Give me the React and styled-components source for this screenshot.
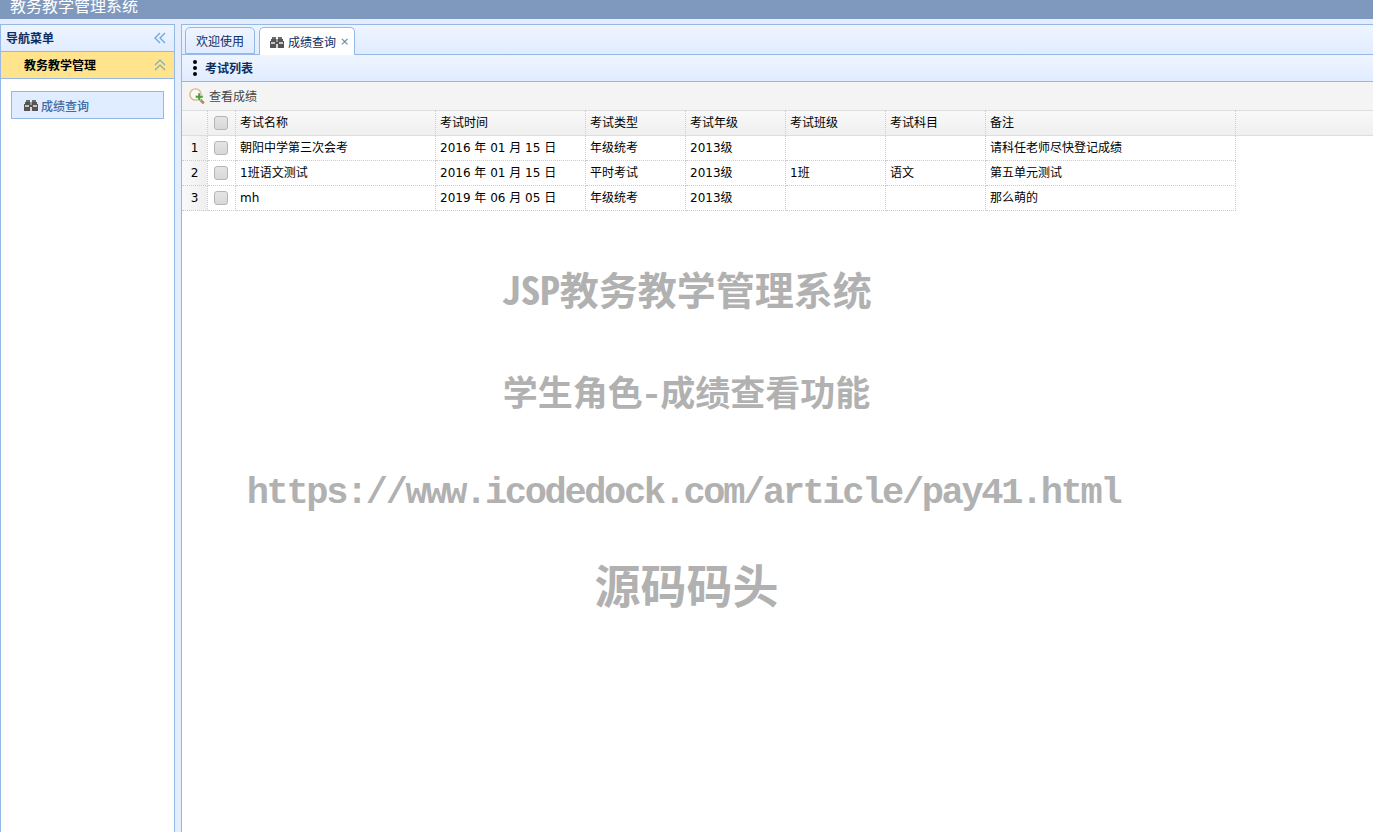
import React from "react";
import styled, { createGlobalStyle } from "styled-components";

const Global = createGlobalStyle`
  html, body { margin: 0; padding: 0; height: 100%; overflow: hidden; background: #fff; }
  #root { height: 100%; }
  * { box-sizing: border-box; }
`;
const FONT = `"DejaVu Sans", "Noto Sans CJK SC", sans-serif`;

const Page = styled.div`
  width: 1373px; height: 832px; display: flex; flex-direction: column; overflow: hidden;
  position: relative; background: #eef4ff; font: 12px ${FONT}; color: #000;
`;
const TopBar = styled.header`
  height: 19px; flex: none; background: #7f99be; overflow: hidden; display: flex; align-items: flex-end;
  padding: 0 0 6px 10px; color: #fff; font: 16px/16px "Noto Sans CJK SC", sans-serif;
`;
const Body = styled.div`
  flex: 1; min-height: 0; display: flex; gap: 6px; padding-top: 5px; background: #e3edfd;
`;
const Side = styled.aside`
  width: 175px; flex: none; background: #fff; border: 1px solid #95b8e7; border-bottom: 0;
  display: flex; flex-direction: column;
`;
const SideHead = styled.div`
  height: 26px; flex: none; display: flex; align-items: center; justify-content: space-between;
  padding: 0 8px 1px 5px; font-weight: 700; color: #0e2d5f;
  background: linear-gradient(#eff5ff, #e0ecff);
`;
const AccHead = styled.div`
  height: 28px; flex: none; display: flex; align-items: center; justify-content: space-between;
  padding: 0 8px 1px 23px; font-weight: 700; color: #000; background: #ffe48d;
  border-top: 1px solid #95b8e7; border-bottom: 1px solid #95b8e7;
`;
const MenuList = styled.div`padding: 12px 10px;`;
const MenuItem = styled.div`
  height: 28px; display: flex; align-items: center; gap: 3px; padding-left: 12px;
  background: #e0ecff; border: 1px solid #95b8e7; color: #416aa3; font-weight: 500;
`;
const Main = styled.main`
  flex: 1; min-width: 0; border-left: 1px solid #95b8e7; border-top: 1px solid #95b8e7;
  display: flex; flex-direction: column; background: #fff;
`;
const TabStrip = styled.div`
  height: 30px; flex: none; display: flex; align-items: flex-end; gap: 4px; padding-left: 3px;
  background: linear-gradient(#eff5ff, #e0ecff); border-bottom: 1px solid #95b8e7;
`;
const Tab = styled.div`
  height: ${p => (p.$active ? 28 : 27)}px; margin-bottom: ${p => (p.$active ? -1 : 0)}px;
  display: flex; align-items: center; gap: 4px;
  padding: 0 ${p => (p.$active ? 5 : 10)}px 0 10px;
  border: 1px solid #95b8e7; border-bottom: ${p => (p.$active ? "0" : "1px solid #95b8e7")};
  border-radius: 5px 5px 0 0; color: #0e2d5f;
  background: ${p => (p.$active ? "#fff" : "linear-gradient(#eff5ff, #e0ecff)")};
`;
const Close = styled.span`color: #6a7a96; font-size: 11px; line-height: 1;`;
const PanelHead = styled.div`
  height: 27px; flex: none; display: flex; align-items: center; gap: 8px; padding: 0 0 1px 11px;
  font-weight: 700; color: #0e2d5f; background: linear-gradient(#eff5ff, #e0ecff);
  border-bottom: 1px solid #95b8e7;
`;
const Dots = styled.span`display: flex; flex-direction: column; gap: 2px;`;
const Dot = styled.i`display: block; width: 4px; height: 4px; border-radius: 50%; background: #000;`;
const Toolbar = styled.div`
  height: 28px; flex: none; display: flex; align-items: center; gap: 4px; padding: 0 0 1px 7px;
  background: #f4f4f4; color: #444;
`;
const Grid = styled.table`
  border-collapse: separate; border-spacing: 0; table-layout: fixed; width: 100%; background: #fff;
`;
const HeadWrap = styled.thead`background: linear-gradient(#f9f9f9, #efefef);`;
const Th = styled.th`
  height: 26px; padding: 0 4px; text-align: left; font-weight: 400; color: #000; line-height: 16px;
  border-top: 1px solid #ddd; border-bottom: 1px solid #ddd; border-right: ${p => (p.$filler ? "0" : "1px dotted #ccc")};
`;
const CheckTh = styled(Th)`padding: 0;`;
const Td = styled.td`
  height: 25px; padding: 0 4px; text-align: left; white-space: nowrap; overflow: hidden; line-height: 16px;
  border-bottom: 1px dotted #ccc; border-right: 1px dotted #ccc;
`;
const NumCell = styled(Td)`
  text-align: center; padding: 0; background: linear-gradient(90deg, #f9f9f9, #efefef);
`;
const CheckCell = styled(Td)`padding: 0;`;
const FillCell = styled.td`padding: 0; border: 0;`;
const Check = styled.span`
  display: block; margin: 0 auto 0 6px; width: 14px; height: 14px; border-radius: 3px;
  background: linear-gradient(#e4e4e4, #d8d8d8); border: 1px solid #b5b5b5;
`;
const Watermark = styled.div`
  position: absolute; left: 0; width: 1373px; text-align: center;
  color: #b1b1b1; font-family: "Noto Sans CJK SC", sans-serif; font-weight: 700; white-space: nowrap;
  font-feature-settings: "hwid";
  top: ${p => p.$top}px; font-size: ${p => p.$size}px; line-height: 1.2;
`;
const UrlMark = styled(Watermark)`
  font-family: "Liberation Mono", monospace; letter-spacing: -2.35px; font-feature-settings: normal;
  padding-right: 6px;
`;

const Towers = () => (
  <svg width="14" height="12" viewBox="0 0 14 12" shapeRendering="crispEdges">
    <path d="M2 1h4v2H2zM8 1h4v2H8z" fill="#6a6a6a" />
    <path d="M1 3h12v2H1z" fill="#555" />
    <path d="M0 5h14v7H0z" fill="#555" />
    <path d="M1 6h4v2H1zM9 6h4v2H9z" fill="#c4c4c4" />
    <path d="M6 3h2v3H6z" fill="#9a9a9a" />
    <path d="M6 8h2v4H6z" fill="#d6d6d6" />
  </svg>
);
const Collapse = () => (
  <svg width="12" height="12" viewBox="0 0 12 12" fill="none" stroke="#69a8dc" strokeWidth="1.3">
    <path d="M6 1 1 6l5 5M11 1 6 6l5 5" />
  </svg>
);
const Chevrons = () => (
  <svg width="12" height="12" viewBox="0 0 12 12" fill="none" stroke="#7fa9b5" strokeWidth="1.2">
    <path d="M1 6l5-5 5 5M1 11l5-5 5 5" />
  </svg>
);
const SearchAdd = () => (
  <svg width="16" height="16" viewBox="0 0 16 16">
    <circle cx="6.5" cy="6.5" r="5.6" fill="#fbf9f4" stroke="#d7b78e" strokeWidth="1.4" />
    <path d="M11.5 12l2.5 2.5" stroke="#b98a58" strokeWidth="2.8" strokeLinecap="round" />
    <path d="M6.5 7.5h2.5V5h2.5v2.5H14V10h-2.5v2.5H9V10H6.5z" fill="#4aa040" stroke="#e5f2e0" strokeWidth=".5" />
  </svg>
);

const cols = [26, 28, 200, 150, 100, 100, 100, 100, 250];
const heads = ["考试名称", "考试时间", "考试类型", "考试年级", "考试班级", "考试科目", "备注"];
const rows = [
  ["朝阳中学第三次会考", "2016 年 01 月 15 日", "年级统考", "2013级", "", "", "请科任老师尽快登记成绩"],
  ["1班语文测试", "2016 年 01 月 15 日", "平时考试", "2013级", "1班", "语文", "第五单元测试"],
  ["mh", "2019 年 06 月 05 日", "年级统考", "2013级", "", "", "那么萌的"],
];

export default function App() {
  return (
    <Page>
      <Global />
      <TopBar>教务教学管理系统</TopBar>
      <Body>
        <Side>
          <SideHead>导航菜单<Collapse /></SideHead>
          <AccHead>教务教学管理<Chevrons /></AccHead>
          <MenuList>
            <MenuItem><Towers />成绩查询</MenuItem>
          </MenuList>
        </Side>
        <Main>
          <TabStrip>
            <Tab>欢迎使用</Tab>
            <Tab $active><Towers />成绩查询<Close>×</Close></Tab>
          </TabStrip>
          <PanelHead>
            <Dots><Dot /><Dot /><Dot /></Dots>
            考试列表
          </PanelHead>
          <Toolbar><SearchAdd />查看成绩</Toolbar>
          <Grid>
            <colgroup>
              {cols.map((w, i) => <col key={i} width={w} />)}
              <col />
            </colgroup>
            <HeadWrap>
              <tr>
                <Th />
                <CheckTh><Check /></CheckTh>
                {heads.map(h => <Th key={h}>{h}</Th>)}
                <Th $filler />
              </tr>
            </HeadWrap>
            <tbody>
              {rows.map((r, i) => (
                <tr key={i}>
                  <NumCell>{i + 1}</NumCell>
                  <CheckCell><Check /></CheckCell>
                  {r.map((c, j) => <Td key={j}>{c}</Td>)}
                  <FillCell />
                </tr>
              ))}
            </tbody>
          </Grid>
        </Main>
      </Body>
      <Watermark $top={265} $size={39}>JSP教务教学管理系统</Watermark>
      <Watermark $top={370} $size={35}>学生角色-成绩查看功能</Watermark>
      <UrlMark $top={471} $size={37}>https://www.icodedock.com/article/pay41.html</UrlMark>
      <Watermark $top={556} $size={46}>源码码头</Watermark>
    </Page>
  );
}
